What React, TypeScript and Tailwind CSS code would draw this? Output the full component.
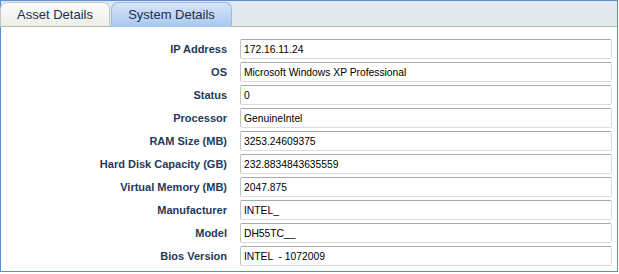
import React from "react";

const rows: [string, string][] = [
  ["IP Address", "172.16.11.24"],
  ["OS", "Microsoft Windows XP Professional"],
  ["Status", "0"],
  ["Processor", "GenuineIntel"],
  ["RAM Size (MB)", "3253.24609375"],
  ["Hard Disk Capacity (GB)", "232.8834843635559"],
  ["Virtual Memory (MB)", "2047.875"],
  ["Manufacturer", "INTEL_"],
  ["Model", "DH55TC__"],
  ["Bios Version", "INTEL  - 1072009"],
];

export default function App() {
  return (
    <div className="w-[619px] h-[274px] bg-white font-['Liberation_Sans',Arial,sans-serif]">
      <div className="w-[618px] h-[272px] border border-[#5b8ed6] flex flex-col">
        {/* tabs */}
        <div className="h-[26px] bg-[#e3e8ee] border-b border-[#b3b9b1] flex items-end gap-[1px] shrink-0">
          <div className="w-[110px] h-[25px] -ml-[1px] -mb-[1px] rounded-t-[7px] border border-[#c4c8c4] border-b-[#b3b9b1] bg-gradient-to-b from-[#fdfdfd] to-[#eceee8] flex items-center justify-center text-[13px] text-[#1b2f4f]">
            Asset Details
          </div>
          <div className="w-[121px] h-[25px] -mb-[1px] rounded-t-[7px] border border-b-0 border-[#9fb9dc] bg-gradient-to-b from-[#d6e5f8] to-[#a8c8ef] flex items-center justify-center text-[13px] text-[#1b2f4f]">
            System Details
          </div>
        </div>

        {/* form */}
        <div className="pt-[12px] grid grid-cols-[226px_372px] gap-x-[13px] gap-y-[3px]">
          {rows.map(([label, value]) => (
            <React.Fragment key={label}>
              <div className="h-[20px] flex items-center justify-end text-[11px] font-bold text-[#1e3a5c]">
                {label}
              </div>
              <input
                readOnly
                value={value}
                className="h-[20px] w-full px-[3px] rounded-[2px] border border-[#dcdcdc] border-t-[#a9a9a9] border-l-[#c4c4c4] bg-white text-[10.3px] text-black outline-none"
              />
            </React.Fragment>
          ))}
        </div>
      </div>
    </div>
  );
}
